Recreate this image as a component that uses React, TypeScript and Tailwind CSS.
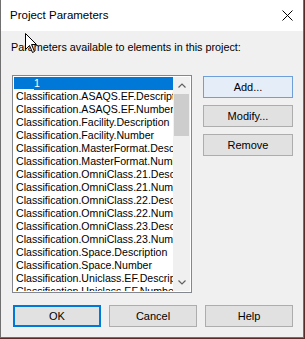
import React from "react";

const items = [
  "Classification.ASAQS.EF.Description",
  "Classification.ASAQS.EF.Number",
  "Classification.Facility.Description",
  "Classification.Facility.Number",
  "Classification.MasterFormat.Description",
  "Classification.MasterFormat.Number",
  "Classification.OmniClass.21.Description",
  "Classification.OmniClass.21.Number",
  "Classification.OmniClass.22.Description",
  "Classification.OmniClass.22.Number",
  "Classification.OmniClass.23.Description",
  "Classification.OmniClass.23.Number",
  "Classification.Space.Description",
  "Classification.Space.Number",
  "Classification.Uniclass.EF.Description",
  "Classification.Uniclass.EF.Number",
];

function Btn({ label, variant }: { label: string; variant?: "hover" | "default" }) {
  const cls =
    variant === "hover"
      ? "border border-[#6f9fd8] bg-[#e5eef8]"
      : variant === "default"
      ? "border-2 border-[#0078d7] bg-[#e1e1e1]"
      : "border border-[#adadad] bg-[#e1e1e1]";
  return (
    <div className={`flex h-[22px] items-center justify-center text-[11px] text-black ${cls}`}>
      {label}
    </div>
  );
}

export default function App() {
  return (
    <div
      className="relative flex h-[339px] w-[305px] bg-[#5b2a2a]"
      style={{ fontFamily: '"Liberation Sans", Arial, sans-serif' }}
    >
      <div className="flex h-[338px] w-[304px] flex-col border-x border-b border-[#707070] bg-[#f0f0f0]">
        {/* title bar */}
        <div className="flex h-[31px] items-center justify-between bg-white pl-[9px] pr-[10px]">
          <span className="text-[11.5px] text-black">Project Parameters</span>
          <svg width="11" height="11" viewBox="0 0 11 11" className="mt-[-1px]">
            <path d="M0.5 0.5 L10.5 10.5 M10.5 0.5 L0.5 10.5" stroke="#000" strokeWidth="1" />
          </svg>
        </div>

        <div className="pl-[10px] pt-[10px] text-[10.8px] leading-[13px] text-black">
          Parameters available to elements in this project:
        </div>

        <div className="mt-[21px] flex pl-[11px]">
          {/* list box */}
          <div className="flex h-[218px] w-[180px] border border-[#828790] bg-white p-px">
            <div className="flex-1 overflow-hidden">
              <div className="relative h-[13px] bg-[#0078d7] pl-[20px] text-[10.6px] leading-[13px] text-white">
                1
                <div className="absolute bottom-0 left-0 h-px w-[20px] bg-white" />
              </div>
              {items.map((t) => (
                <div
                  key={t}
                  className="h-[13px] whitespace-nowrap pl-[2px] text-[10.6px] leading-[13px] text-black"
                >
                  {t}
                </div>
              ))}
            </div>
            {/* scrollbar */}
            <div className="flex w-[17px] flex-col bg-[#f0f0f0]">
              <div className="flex h-[17px] items-center justify-center">
                <svg width="8" height="5" viewBox="0 0 8 5">
                  <path d="M0.5 4.5 L4 1 L7.5 4.5" stroke="#606060" strokeWidth="1.2" fill="none" />
                </svg>
              </div>
              <div className="mx-px h-[42px] bg-[#cdcdcd]" />
              <div className="flex-1" />
              <div className="flex h-[17px] items-center justify-center">
                <svg width="8" height="5" viewBox="0 0 8 5">
                  <path d="M0.5 0.5 L4 4 L7.5 0.5" stroke="#606060" strokeWidth="1.2" fill="none" />
                </svg>
              </div>
            </div>
          </div>

          {/* side buttons */}
          <div className="ml-[11px] mt-px flex w-[90px] flex-col gap-[7px]">
            <Btn label="Add..." variant="hover" />
            <Btn label="Modify..." />
            <Btn label="Remove" />
          </div>
        </div>

        {/* bottom buttons */}
        <div className="mt-[12px] flex gap-[8px] pl-[12px]">
          <div className="w-[88px]">
            <Btn label="OK" variant="default" />
          </div>
          <div className="w-[88px]">
            <Btn label="Cancel" />
          </div>
          <div className="w-[88px]">
            <Btn label="Help" />
          </div>
        </div>
      </div>

      {/* mouse cursor */}
      <svg
        className="absolute left-[25px] top-[33px]"
        width="13"
        height="21"
        viewBox="0 0 13 21"
      >
        <path
          d="M0.5 0.5 L0.5 16.5 L4.5 12.5 L7.5 19.5 L9.5 18.5 L6.5 11.5 L11.5 11.5 Z"
          fill="#fff"
          stroke="#000"
          strokeWidth="1"
        />
      </svg>
    </div>
  );
}
